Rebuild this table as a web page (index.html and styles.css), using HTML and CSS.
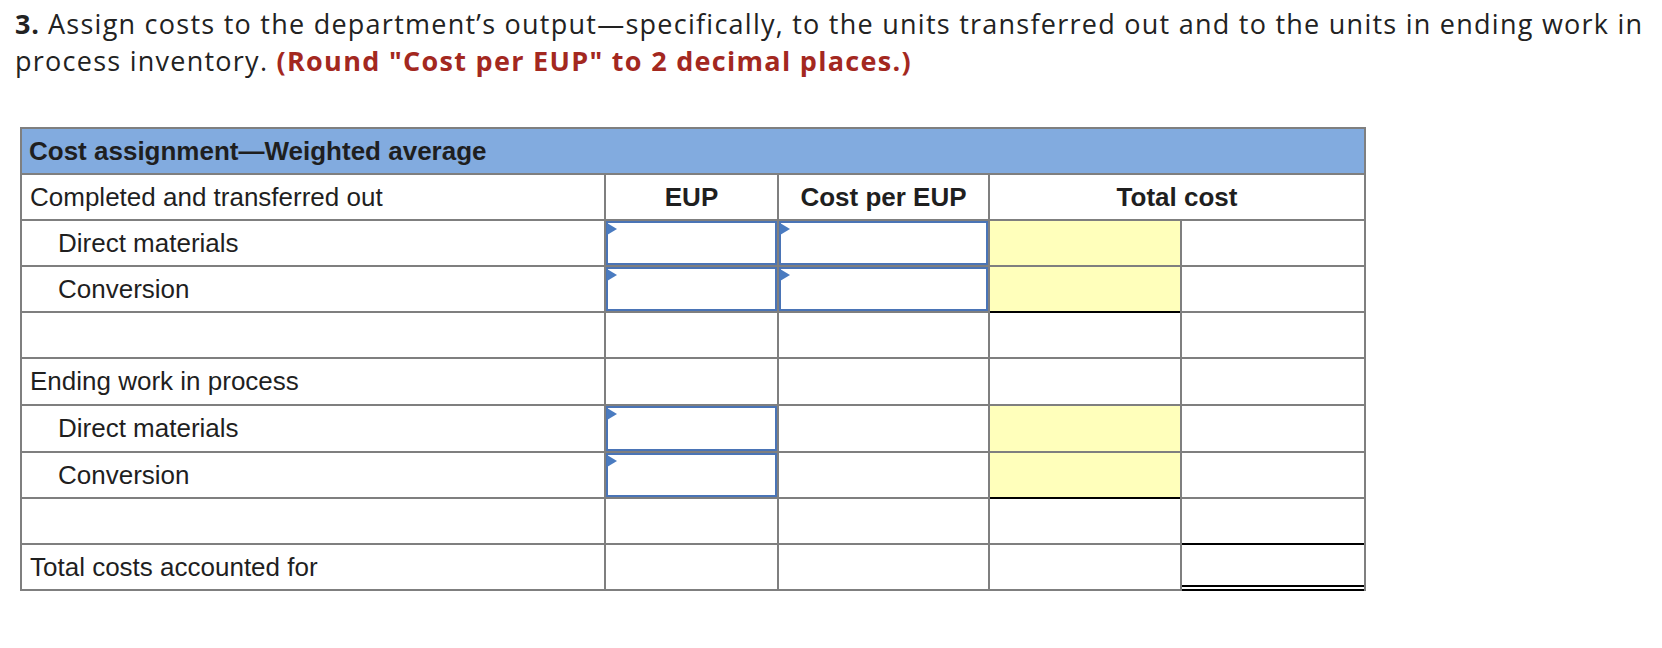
FILE: index.html
```html
<!DOCTYPE html>
<html lang="en">
<head>
<meta charset="utf-8">
<title>Cost assignment</title>
<link rel="stylesheet" href="styles.css">
</head>
<body>
<p class="prompt"><b>3.</b> Assign costs to the department’s output—specifically, to the units transferred out and to the units in ending work in process inventory. <span class="hint">(Round "Cost per EUP" to 2 decimal places.)</span></p>

<div class="sheet">
  <div class="cell title">Cost assignment—Weighted average</div>

  <div class="cell label">Completed and transferred out</div>
  <div class="cell head">EUP</div>
  <div class="cell head">Cost per EUP</div>
  <div class="cell head span2">Total cost</div>

  <div class="cell label indent">Direct materials</div>
  <div class="cell"><div class="input"></div></div>
  <div class="cell"><div class="input"></div></div>
  <div class="cell calc"></div>
  <div class="cell"></div>

  <div class="cell label indent">Conversion</div>
  <div class="cell"><div class="input"></div></div>
  <div class="cell"><div class="input"></div></div>
  <div class="cell calc underline"></div>
  <div class="cell"></div>

  <div class="cell label"></div>
  <div class="cell"></div>
  <div class="cell"></div>
  <div class="cell"></div>
  <div class="cell"></div>

  <div class="cell label">Ending work in process</div>
  <div class="cell"></div>
  <div class="cell"></div>
  <div class="cell"></div>
  <div class="cell"></div>

  <div class="cell label indent">Direct materials</div>
  <div class="cell"><div class="input"></div></div>
  <div class="cell"></div>
  <div class="cell calc"></div>
  <div class="cell"></div>

  <div class="cell label indent">Conversion</div>
  <div class="cell"><div class="input"></div></div>
  <div class="cell"></div>
  <div class="cell calc underline"></div>
  <div class="cell"></div>

  <div class="cell label"></div>
  <div class="cell"></div>
  <div class="cell"></div>
  <div class="cell"></div>
  <div class="cell"></div>

  <div class="cell label">Total costs accounted for</div>
  <div class="cell"></div>
  <div class="cell"></div>
  <div class="cell"></div>
  <div class="cell grand"></div>
</div>
</body>
</html>
```

FILE: styles.css
```css
html, body {
  margin: 0;
  padding: 0;
  background: #ffffff;
}

body {
  padding: 0 2px 0 15px;
}

.prompt {
  margin: 0;
  padding-top: 5px;
  font-family: "Open Sans", Lato, sans-serif;
  font-size: 27px;
  letter-spacing: 1.25px;
  line-height: 37px;
  color: #222222;
}

.prompt b {
  font-weight: 700;
  letter-spacing: 0.8px;
}

.hint {
  color: #a3281f;
  font-weight: 700;
  letter-spacing: 1.3px;
}

.sheet {
  margin: 48px 0 0 5px;
  display: grid;
  grid-template-columns: 582px 171px 209px 190px 182px;
  grid-template-rows: 44px 44px 44px 44px 44px 45px 45px 44px 44px 44px;
  gap: 2px;
  padding: 2px;
  width: max-content;
  background: #7f7f7f;
  font-family: "Liberation Sans", Arial, sans-serif;
  font-size: 26px;
  color: #1f1f1f;
}

.cell {
  background: #ffffff;
  display: flex;
  align-items: center;
  position: relative;
}

.title {
  grid-column: 1 / -1;
  background: #82abdf;
  font-weight: 700;
  padding-left: 7px;
}

.label {
  padding-left: 8px;
}

.indent {
  padding-left: 36px;
}

.head {
  justify-content: center;
  font-weight: 700;
}

.span2 {
  grid-column: span 2;
}

.calc {
  background: #ffffbb;
}

.underline {
  box-shadow: 0 2px 0 #000000;
}

.grand {
  box-shadow: 0 -2px 0 #000000, 0 2px 0 #000000, inset 0 -2px 0 #ffffff, inset 0 -4px 0 #000000;
}

.input {
  align-self: stretch;
  flex: 1;
  border: 2px solid #4a74b6;
  position: relative;
}

.input::before {
  content: "";
  position: absolute;
  left: -1px;
  top: 0;
  border-left: 10px solid #4a7bc0;
  border-top: 6px solid transparent;
  border-bottom: 6px solid transparent;
}
```
